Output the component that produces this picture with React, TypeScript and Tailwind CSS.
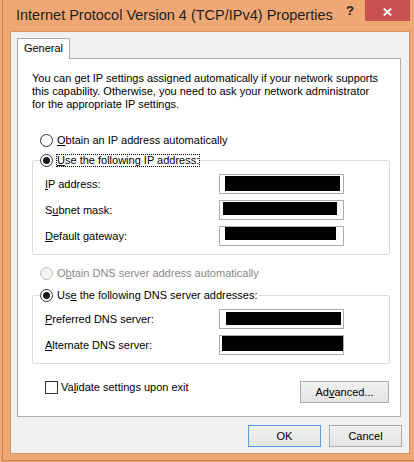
import type { ReactNode } from 'react';

// Win8 style "IPv4 Properties" dialog

function Radio({ checked, disabled }: { checked?: boolean; disabled?: boolean }) {
  return (
    <span
      className={`flex h-[13px] w-[13px] shrink-0 items-center justify-center rounded-full border ${
        disabled ? 'border-[#BCBCBC] bg-[#F4F4F4]' : 'border-[#333333] bg-white'
      }`}
    >
      {checked ? <span className="h-[7px] w-[7px] rounded-full bg-[#1A1A1A]" /> : null}
    </span>
  );
}

function Field({ label, bar }: { label: ReactNode; bar: string }) {
  return (
    <div className="flex h-[20px] items-center pl-[12px]">
      <span className="w-[174px] whitespace-nowrap">{label}</span>
      <div className="h-[20px] w-[125px] border border-[#ABADB3] bg-white">
        <div className={`bg-black ${bar}`} />
      </div>
    </div>
  );
}

function Legend({ children, focused }: { children: ReactNode; focused?: boolean }) {
  return (
    <div className="-mt-[7px] ml-[7px] flex w-fit items-center bg-white">
      <Radio checked />
      <span
        className={`ml-[3px] whitespace-nowrap border leading-[11px] ${
          focused ? 'border-dotted border-black' : 'border-transparent'
        }`}
      >
        {children}
      </span>
    </div>
  );
}

function Button({ children, primary }: { children: ReactNode; primary?: boolean }) {
  return (
    <div
      className={`flex h-[22px] w-[73px] items-center justify-center border bg-linear-to-b from-[#F0F0F0] to-[#E5E5E5] ${
        primary ? 'border-[#569DE5]' : 'border-[#ACACAC]'
      }`}
    >
      {children}
    </div>
  );
}

export default function App() {
  return (
    <div className="h-[462px] w-[414px] overflow-hidden bg-[#EFA873] pb-px pl-[2px] font-['Liberation_Sans',Arial,sans-serif] text-[11px] leading-[13px] text-black">
      <div className="flex h-full flex-col border-b border-l border-[#C08355]">
        {/* title bar */}
        <div className="flex h-[31px] shrink-0 items-start">
          <div className="whitespace-nowrap pl-[13px] pt-[7px] text-[14.5px] leading-[17px] text-[#1E1E1E]">
            Internet Protocol Version 4 (TCP/IPv4) Properties
          </div>
          <div className="ml-auto mr-[11px] pt-[3px] text-[13px] font-bold leading-[15px] text-[#222222]">?</div>
          <div className="mr-[4px] flex h-[21px] w-[45px] justify-center bg-[#C75050] pt-[8px]">
            <svg width="9" height="8" viewBox="0 0 9 8">
              <path d="M0.8 0.6 L8.2 7.4 M8.2 0.6 L0.8 7.4" stroke="#FFFFFF" strokeWidth="1.9" fill="none" />
            </svg>
          </div>
        </div>

        {/* client area */}
        <div className="ml-[7px] flex h-[423px] w-[400px] flex-col border border-[#D39561] bg-[#F0F0F0] pl-[6px] pr-[8px] pt-[6px]">
          <div className="relative z-10 -mb-px flex h-[21px] w-[53px] justify-center border-l border-r border-t border-[#ACACAC] bg-white pt-[3px]">
            General
          </div>

          <div className="flex h-[359px] flex-col border border-[#ACACAC] bg-white">
            <p className="ml-[14px] mt-[13px] whitespace-nowrap">
              You can get IP settings assigned automatically if your network supports
              <br />
              this capability. Otherwise, you need to ask your network administrator
              <br />
              for the appropriate IP settings.
            </p>

            <div className="ml-[22px] mt-[23px] flex items-center">
              <Radio />
              <span className="ml-[4px]">
                <span className="underline">O</span>btain an IP address automatically
              </span>
            </div>

            <div className="ml-[14px] mr-[10px] mt-[13px] rounded-[2px] border border-[#DCDCDC] pb-[8px]">
              <Legend focused>
                <span className="underline">U</span>se the following IP address:
              </Legend>
              <div className="mt-[7px] flex flex-col gap-[6px]">
                <Field
                  label={<><span className="underline">I</span>P address:</>}
                  bar="ml-[5px] mt-[1px] h-[15px] w-[115px]"
                />
                <Field
                  label={<>S<span className="underline">u</span>bnet mask:</>}
                  bar="ml-[3px] mt-[1px] h-[13px] w-[114px]"
                />
                <Field
                  label={<><span className="underline">D</span>efault gateway:</>}
                  bar="ml-[5px] mt-0 h-[13px] w-[111px]"
                />
              </div>
            </div>

            <div className="ml-[22px] mt-[12px] flex items-center text-[#8A8A8A]">
              <Radio disabled />
              <span className="ml-[4px]">
                O<span className="underline">b</span>tain DNS server address automatically
              </span>
            </div>

            <div className="ml-[14px] mr-[10px] mt-[15px] rounded-[2px] border border-[#DCDCDC] pb-[8px]">
              <Legend>
                Us<span className="underline">e</span> the following DNS server addresses:
              </Legend>
              <div className="mt-[7px] flex flex-col gap-[6px]">
                <Field
                  label={<><span className="underline">P</span>referred DNS server:</>}
                  bar="ml-[6px] mt-[2px] h-[13px] w-[115px]"
                />
                <Field
                  label={<><span className="underline">A</span>lternate DNS server:</>}
                  bar="ml-[2px] mt-0 h-[15px] w-[121px]"
                />
              </div>
            </div>

            <div className="mr-[11px] mt-[17px] flex items-start">
              <div className="ml-[27px] flex items-center">
                <span className="h-[13px] w-[13px] border border-[#333333] bg-white" />
                <span className="ml-[3px]">
                  Va<span className="underline">l</span>idate settings upon exit
                </span>
              </div>
              <div className="ml-auto flex h-[22px] w-[89px] items-center justify-center border border-[#ACACAC] bg-linear-to-b from-[#F0F0F0] to-[#E5E5E5]">
                Ad<span className="underline">v</span>anced...
              </div>
            </div>
          </div>

          <div className="-mr-px mt-[8px] flex justify-end gap-[8px]">
            <Button primary>OK</Button>
            <Button>Cancel</Button>
          </div>
        </div>
      </div>
    </div>
  );
}
